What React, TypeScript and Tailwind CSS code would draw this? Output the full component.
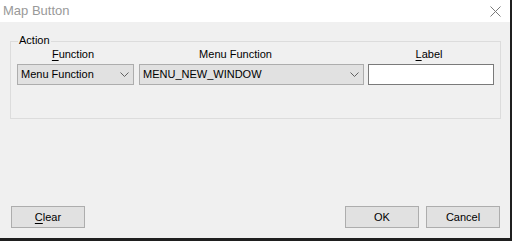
import React from 'react';

function Chevron() {
  return (
    <svg width="9" height="5" viewBox="0 0 9 5" className="shrink-0">
      <polyline points="0.5,0.5 4.5,4.5 8.5,0.5" fill="none" stroke="#606060" strokeWidth="1" />
    </svg>
  );
}

function Combo({ value, width }: { value: string; width: string }) {
  return (
    <div className={`${width} h-[21px] flex items-center justify-between bg-[#e1e1e1] border border-[#adadad] pl-[3px] pr-[4px]`}>
      <span className="text-black whitespace-nowrap">{value}</span>
      <Chevron />
    </div>
  );
}

function Button({ children, className = '' }: { children: React.ReactNode; className?: string }) {
  return (
    <button className={`w-[74px] h-[22px] bg-[#e1e1e1] border border-[#adadad] text-black text-[11px] leading-none ${className}`}>
      {children}
    </button>
  );
}

export default function App() {
  return (
    <div className="w-[512px] h-[241px] flex flex-col border-r-2 border-b-[3px] border-[#1f1f1f] font-['Liberation_Sans',Arial,sans-serif] text-[11px] text-black select-none">

      {/* Title bar */}
      <div className="h-[22px] shrink-0 bg-white flex items-center justify-between">
        <span className="pl-[3px] text-[13px] text-[#999999]">Map Button</span>
        <svg width="11" height="11" viewBox="0 0 11 11" className="mr-[9px]">
          <path d="M0.5 0.5 L10.5 10.5 M10.5 0.5 L0.5 10.5" stroke="#7a7a7a" strokeWidth="1" fill="none" />
        </svg>
      </div>

      {/* Body */}
      <div className="flex-1 bg-[#f0f0f0] flex flex-col pt-[19px] px-[10px] pb-[10px]">

        {/* Action group */}
        <div className="relative w-[491px] h-[78px] border border-[#dcdcdc] pt-[6px]">
          <span className="absolute -top-[8px] left-[7px] px-[1px] bg-[#f0f0f0] leading-[13px]">Action</span>

          <div className="flex ml-[6px] gap-[5px] leading-[13px]">
            <div className="w-[117px] text-center pr-[5px]">
              <span className="underline underline-offset-2">F</span>unction
            </div>
            <div className="w-[225px] text-center pr-[32px]">Menu Function</div>
            <div className="w-[126px] text-center pr-[4px] -ml-[1px]">
              <span className="underline underline-offset-2">L</span>abel
            </div>
          </div>

          <div className="flex items-center ml-[6px] mt-[3px]">
            <Combo value="Menu Function" width="w-[117px]" />
            <div className="ml-[5px]">
              <Combo value="MENU_NEW_WINDOW" width="w-[225px]" />
            </div>
            <div className="ml-[4px] w-[126px] h-[21px] bg-white border border-[#7a7a7a]" />
          </div>
        </div>

        {/* Buttons */}
        <div className="mt-auto flex items-center">
          <Button className="ml-[1px]">
            <span className="underline underline-offset-2">C</span>lear
          </Button>
          <div className="flex-1" />
          <Button>OK</Button>
          <Button className="ml-[7px]">Cancel</Button>
        </div>
      </div>
    </div>
  );
}
